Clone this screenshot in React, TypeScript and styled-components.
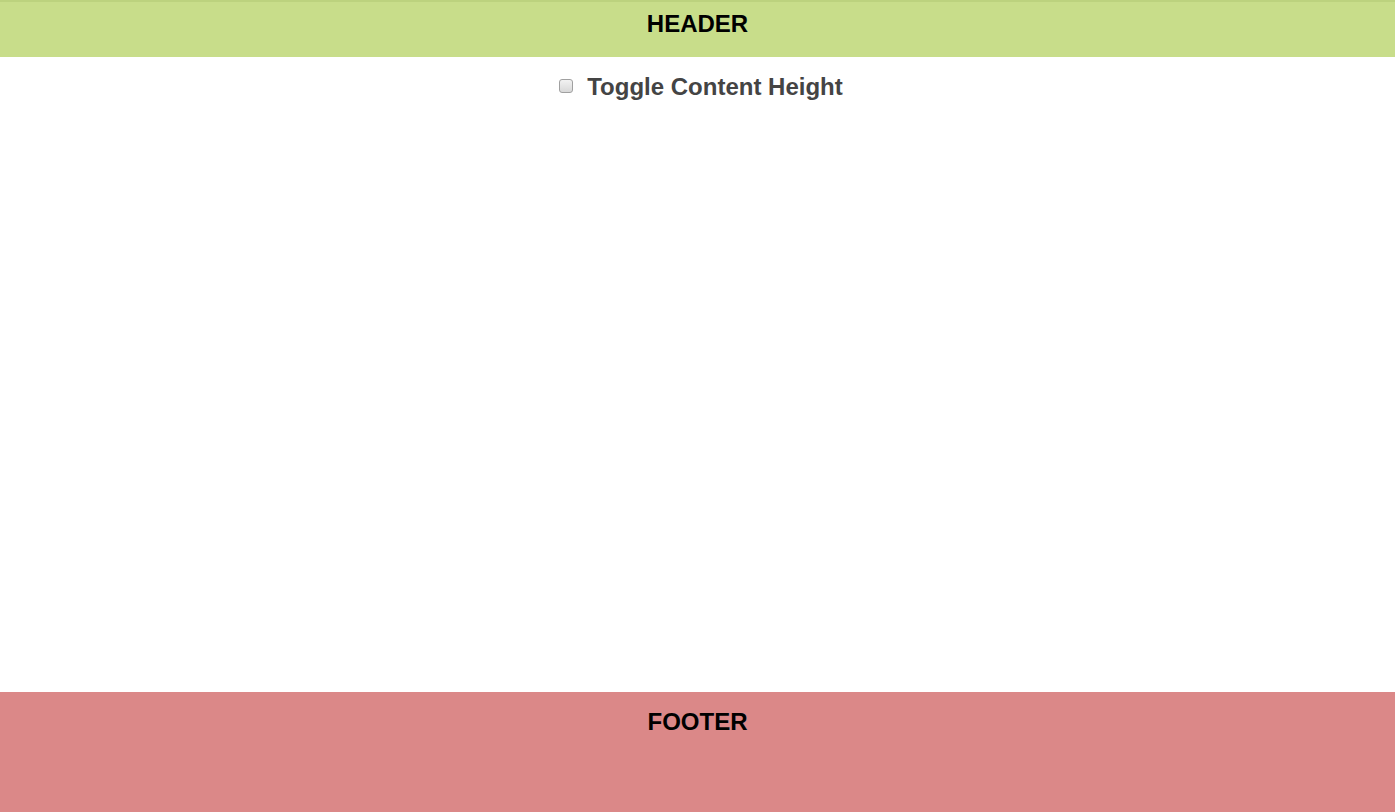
import React, { useState } from 'react'
import styled, { createGlobalStyle } from 'styled-components'

const GlobalStyle = createGlobalStyle`
    html, body {
        margin: 0;
        padding: 0;
        height: 100%;
    }
    body {
        font-family: 'Liberation Sans', Arial, sans-serif;
        background: #ffffff;
    }
    #root {
        height: 100%;
    }
`

const Page = styled.div`
    display: flex;
    flex-direction: column;
    min-height: 100vh;
`

const Header = styled.header`
    background: #c8dd8a;
    border-top: 2px solid #bcd27e;
    padding-top: 8px;
    box-sizing: border-box;
    height: 57px;
    text-align: center;
`

const Title = styled.h2`
    margin: 0;
    font-size: 24px;
    font-weight: bold;
    line-height: 28px;
    color: #000000;
`

const Content = styled.main<{ tall: boolean }>`
    flex: 1;
    padding-top: 16px;
    min-height: ${props => props.tall ? 1200 : 0}px;
    text-align: center;
`

const ToggleLabel = styled.label`
    display: inline-flex;
    align-items: center;
    gap: 14px;
    font-size: 24px;
    font-weight: bold;
    line-height: 28px;
    color: #444444;
    cursor: pointer;
    margin-left: 7px;
`

const Check = styled.input`
    appearance: none;
    width: 14px;
    height: 14px;
    margin: 0;
    margin-top: -2px;
    border: 1px solid #a0a0a0;
    border-radius: 3px;
    background: linear-gradient(#f2f2f2, #d8d8d8);
    box-sizing: border-box;
    &:checked {
        background: linear-gradient(#e8e8e8, #cfcfcf);
    }
`

const Footer = styled.footer`
    background: #db8888;
    height: 120px;
    padding-top: 16px;
    box-sizing: border-box;
    text-align: center;
`

export default function App() {
    const [tall, setTall] = useState(false)
    return (
        <>
            <GlobalStyle />
            <Page>
                <Header>
                    <Title>HEADER</Title>
                </Header>
                <Content tall={tall}>
                    <ToggleLabel>
                        <Check type="checkbox" checked={tall} onChange={() => setTall(!tall)} />
                        Toggle Content Height
                    </ToggleLabel>
                </Content>
                <Footer>
                    <Title>FOOTER</Title>
                </Footer>
            </Page>
        </>
    )
}
